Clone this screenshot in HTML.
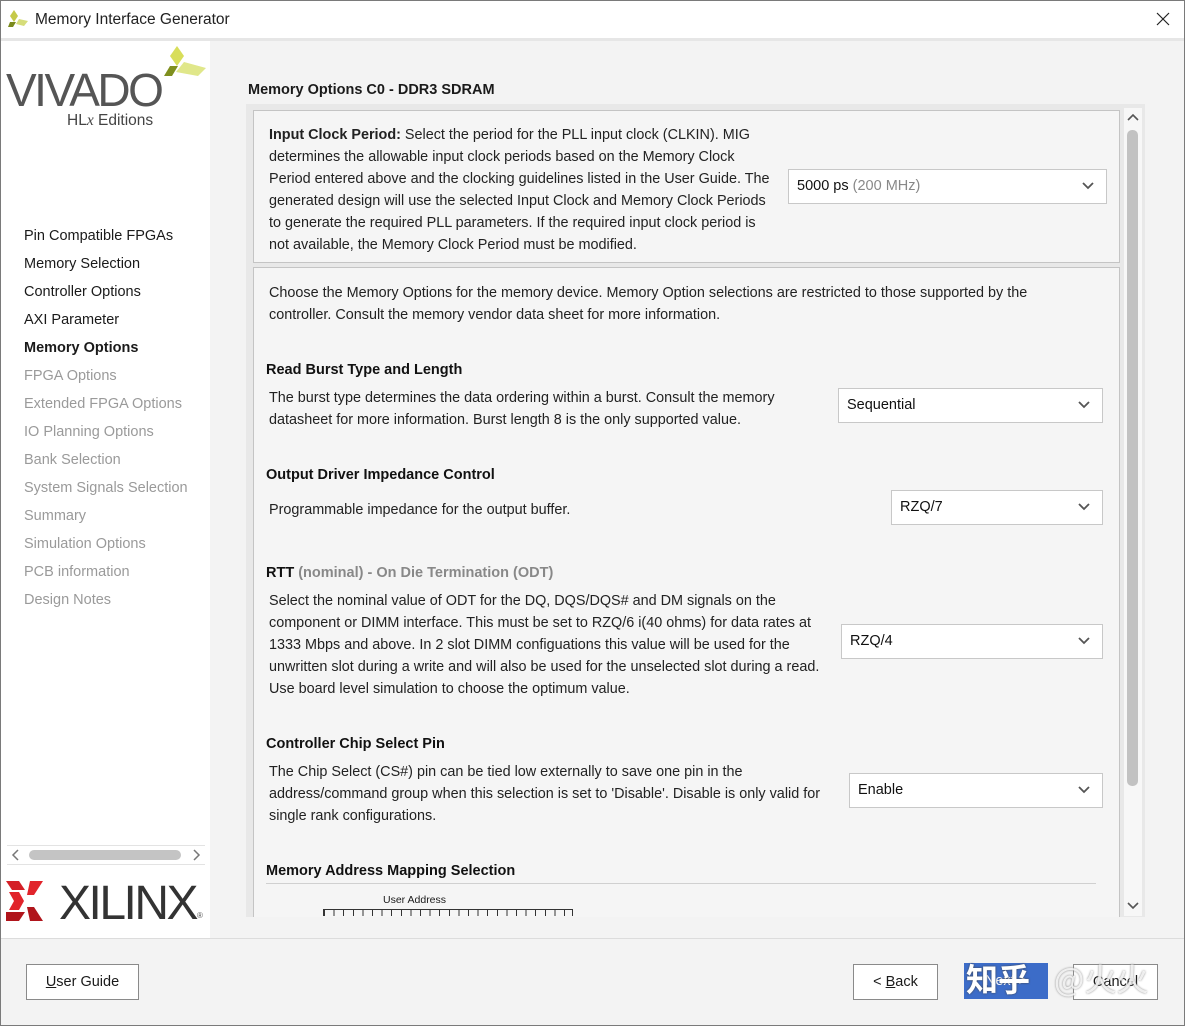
<!DOCTYPE html>
<html><head><meta charset="utf-8"><style>
*{box-sizing:border-box;margin:0;padding:0}
body{width:1185px;height:1026px;position:relative;overflow:hidden;background:#f3f3f3;font-family:"Liberation Sans",Arial,sans-serif;font-size:14px;color:#1a1a1a}
.a{position:absolute}
.nav{position:absolute;left:24px;font-size:14.5px;color:#1a1a1a}
.nav.d{color:#9a9a9a}
.t{position:absolute;left:269px;line-height:22px;font-size:14.4px;color:#222}
.h{position:absolute;left:266px;font-weight:bold;font-size:14.5px;color:#111}
.sel{position:absolute;background:#fff;border:1px solid #c8c8c8;height:35px;font-size:14.5px;padding:8px 8px;color:#111}
.sel svg{position:absolute;right:12px;top:12px}
.btn{position:absolute;background:#fff;border:1px solid #8a8a8a;height:36px;font-size:14.5px;text-align:center;line-height:34px}
</style></head><body>
<div class="a" style="left:0;top:0;width:1185px;height:1026px;border:1px solid #7a7a7a"></div>
<div class="a" style="left:1px;top:1px;width:1183px;height:37px;background:#fff"></div>
<svg class="a" style="left:8px;top:8px" width="22" height="20"><polygon points="6,2 10,8 6,14 2,8" fill="#c5c948"/><polygon points="2,14 8,14 5,19 0,19" fill="#7a8a1c"/><polygon points="11,11 20,13 16,18 8,16" fill="#d6dd7a"/></svg>
<div class="a" style="left:35px;top:11px;font-size:15.5px;color:#222">Memory Interface Generator</div>
<svg class="a" style="left:1156px;top:12px" width="14" height="14"><path d="M1 1L13 13M13 1L1 13" stroke="#222" stroke-width="1.2"/></svg>
<div class="a" style="left:1px;top:38px;width:1183px;height:3px;background:#e6e6e6"></div>
<div class="a" style="left:1px;top:41px;width:209px;height:897px;background:#fff"></div>
<div class="a" style="left:6px;top:63px;font-size:46px;letter-spacing:-2.5px;color:#555;font-weight:300">VIVADO</div>
<svg class="a" style="left:162px;top:46px" width="46" height="44"><polygon points="15,0 22,10 15,20 8,10" fill="#d8de5a"/><polygon points="8,20 16,20 10,30 2,30" fill="#7f8f1e"/><polygon points="22,16 44,22 36,30 14,26" fill="#e0e78a"/></svg>
<div class="a" style="left:67px;top:112px;font-size:15.5px;color:#444">HL<i style="font-family:'Liberation Serif',serif">x</i> Editions</div>
<div class="nav" style="top:228px">Pin Compatible FPGAs</div>
<div class="nav" style="top:256px">Memory Selection</div>
<div class="nav" style="top:284px">Controller Options</div>
<div class="nav" style="top:312px">AXI Parameter</div>
<div class="nav" style="top:340px;font-weight:bold">Memory Options</div>
<div class="nav d" style="top:368px">FPGA Options</div>
<div class="nav d" style="top:396px">Extended FPGA Options</div>
<div class="nav d" style="top:424px">IO Planning Options</div>
<div class="nav d" style="top:452px">Bank Selection</div>
<div class="nav d" style="top:480px">System Signals Selection</div>
<div class="nav d" style="top:508px">Summary</div>
<div class="nav d" style="top:536px">Simulation Options</div>
<div class="nav d" style="top:564px">PCB information</div>
<div class="nav d" style="top:592px">Design Notes</div>
<div class="a" style="left:7px;top:845px;width:198px;height:20px;border-top:1px solid #e3e3e3;border-bottom:1px solid #e3e3e3"></div>
<div class="a" style="left:29px;top:850px;width:152px;height:10px;background:#c4c4c4;border-radius:5px"></div>
<svg class="a" style="left:11px;top:849px" width="10" height="12"><path d="M7 1L2 6L7 11" stroke="#777" stroke-width="1.5" fill="none"/></svg>
<svg class="a" style="left:191px;top:849px" width="10" height="12"><path d="M3 1L8 6L3 11" stroke="#777" stroke-width="1.5" fill="none"/></svg>
<svg class="a" style="left:6px;top:881px" width="38" height="40"><polygon points="0,0 13,0 19,9 6,9" fill="#d42027"/><polygon points="0,31 6,31 19,31 13,40 0,40" fill="#b0151c"/><polygon points="3,11 13,11 18,20 13,29 3,29 8,20" fill="#e1242b"/><polygon points="24,0 37,0 28,14 21,14" fill="#e1242b"/><polygon points="21,26 28,26 37,40 24,40" fill="#b0151c"/></svg>
<div class="a" style="left:59px;top:876px;font-size:48px;color:#333;letter-spacing:-2.5px">XILINX</div>
<div class="a" style="left:197px;top:911px;font-size:8px;color:#555">®</div>
<div class="a" style="left:248px;top:82px;font-weight:bold;font-size:14.5px">Memory Options C0 - DDR3 SDRAM</div>
<div class="a" style="left:246px;top:104px;width:899px;height:813px;background:#e8e8e8"></div>
<div class="a" style="left:253px;top:110px;width:867px;height:153px;background:#f5f5f5;border:1px solid #c4c4c4"></div>
<div class="a" style="left:253px;top:267px;width:867px;height:650px;background:#f5f5f5;border:1px solid #c4c4c4;border-bottom:none"></div>
<div class="a" style="left:1124px;top:108px;width:18px;height:808px;background:#f7f7f7"></div>
<div class="a" style="left:1127px;top:130px;width:11px;height:656px;background:#c2c2c2;border-radius:5px"></div>
<svg class="a" style="left:1127px;top:113px" width="12" height="8"><path d="M1 7L6 2L11 7" stroke="#555" stroke-width="1.6" fill="none"/></svg>
<svg class="a" style="left:1127px;top:902px" width="12" height="8"><path d="M1 1L6 6L11 1" stroke="#555" stroke-width="1.6" fill="none"/></svg>
<div class="t" style="top:124px"><b>Input Clock Period:</b> Select the period for the PLL input clock (CLKIN). MIG<br>determines the allowable input clock periods based on the Memory Clock<br>Period entered above and the clocking guidelines listed in the User Guide. The<br>generated design will use the selected Input Clock and Memory Clock Periods<br>to generate the required PLL parameters. If the required input clock period is<br>not available, the Memory Clock Period must be modified.</div>
<div class="sel" style="left:788px;top:169px;width:319px">5000 ps <span style="color:#888">(200 MHz)</span><svg width="12" height="8"><path d="M1 1L6 6L11 1" stroke="#555" stroke-width="1.8" fill="none"/></svg></div>
<div class="t" style="top:282px">Choose the Memory Options for the memory device. Memory Option selections are restricted to those supported by the<br>controller. Consult the memory vendor data sheet for more information.</div>
<div class="h" style="top:362px">Read Burst Type and Length</div>
<div class="t" style="top:387px">The burst type determines the data ordering within a burst. Consult the memory<br>datasheet for more information. Burst length 8 is the only supported value.</div>
<div class="sel" style="left:838px;top:388px;width:265px">Sequential<svg width="12" height="8"><path d="M1 1L6 6L11 1" stroke="#555" stroke-width="1.8" fill="none"/></svg></div>
<div class="h" style="top:467px">Output Driver Impedance Control</div>
<div class="t" style="top:499px">Programmable impedance for the output buffer.</div>
<div class="sel" style="left:891px;top:490px;width:212px">RZQ/7<svg width="12" height="8"><path d="M1 1L6 6L11 1" stroke="#555" stroke-width="1.8" fill="none"/></svg></div>
<div class="h" style="top:565px">RTT <span style="color:#888">(nominal) - On Die Termination (ODT)</span></div>
<div class="t" style="top:590px">Select the nominal value of ODT for the DQ, DQS/DQS# and DM signals on the<br>component or DIMM interface. This must be set to RZQ/6 i(40 ohms) for data rates at<br>1333 Mbps and above. In 2 slot DIMM configuations this value will be used for the<br>unwritten slot during a write and will also be used for the unselected slot during a read.<br>Use board level simulation to choose the optimum value.</div>
<div class="sel" style="left:841px;top:624px;width:262px">RZQ/4<svg width="12" height="8"><path d="M1 1L6 6L11 1" stroke="#555" stroke-width="1.8" fill="none"/></svg></div>
<div class="h" style="top:736px">Controller Chip Select Pin</div>
<div class="t" style="top:761px">The Chip Select (CS#) pin can be tied low externally to save one pin in the<br>address/command group when this selection is set to 'Disable'. Disable is only valid for<br>single rank configurations.</div>
<div class="sel" style="left:849px;top:773px;width:254px">Enable<svg width="12" height="8"><path d="M1 1L6 6L11 1" stroke="#555" stroke-width="1.8" fill="none"/></svg></div>
<div class="h" style="top:863px">Memory Address Mapping Selection</div>
<div class="a" style="left:266px;top:883px;width:830px;height:1px;background:#d0d0d0"></div>
<div class="a" style="left:383px;top:894px;font-size:10.5px">User Address</div>
<div class="a" style="left:323px;top:909px;width:250px;height:7px;border:1px solid #333;border-bottom:none;background:repeating-linear-gradient(90deg,#333 0 1px,transparent 1px 9.6px)"></div>
<div class="a" style="left:1px;top:938px;width:1183px;height:1px;background:#dcdcdc"></div>
<div class="btn" style="left:26px;top:964px;width:113px"><u>U</u>ser Guide</div>
<div class="btn" style="left:853px;top:964px;width:85px">&lt; <u>B</u>ack</div>
<div class="btn" style="left:964px;top:963px;width:84px;background:#3c6cc8;border-color:#3c6cc8;color:#fff">Next &gt;</div>
<div class="btn" style="left:1073px;top:964px;width:85px">Cancel</div>
<div class="a" style="left:966px;top:955px;font-size:32px;color:#fff;font-family:'Noto Sans CJK SC',sans-serif;font-weight:bold;text-shadow:0 0 2px #444">知乎</div>
<div class="a" style="left:1054px;top:955px;font-size:32px;color:rgba(255,255,255,.8);font-family:'Noto Sans CJK SC',sans-serif;text-shadow:0 0 2px #888">@火火</div>
</body></html>
